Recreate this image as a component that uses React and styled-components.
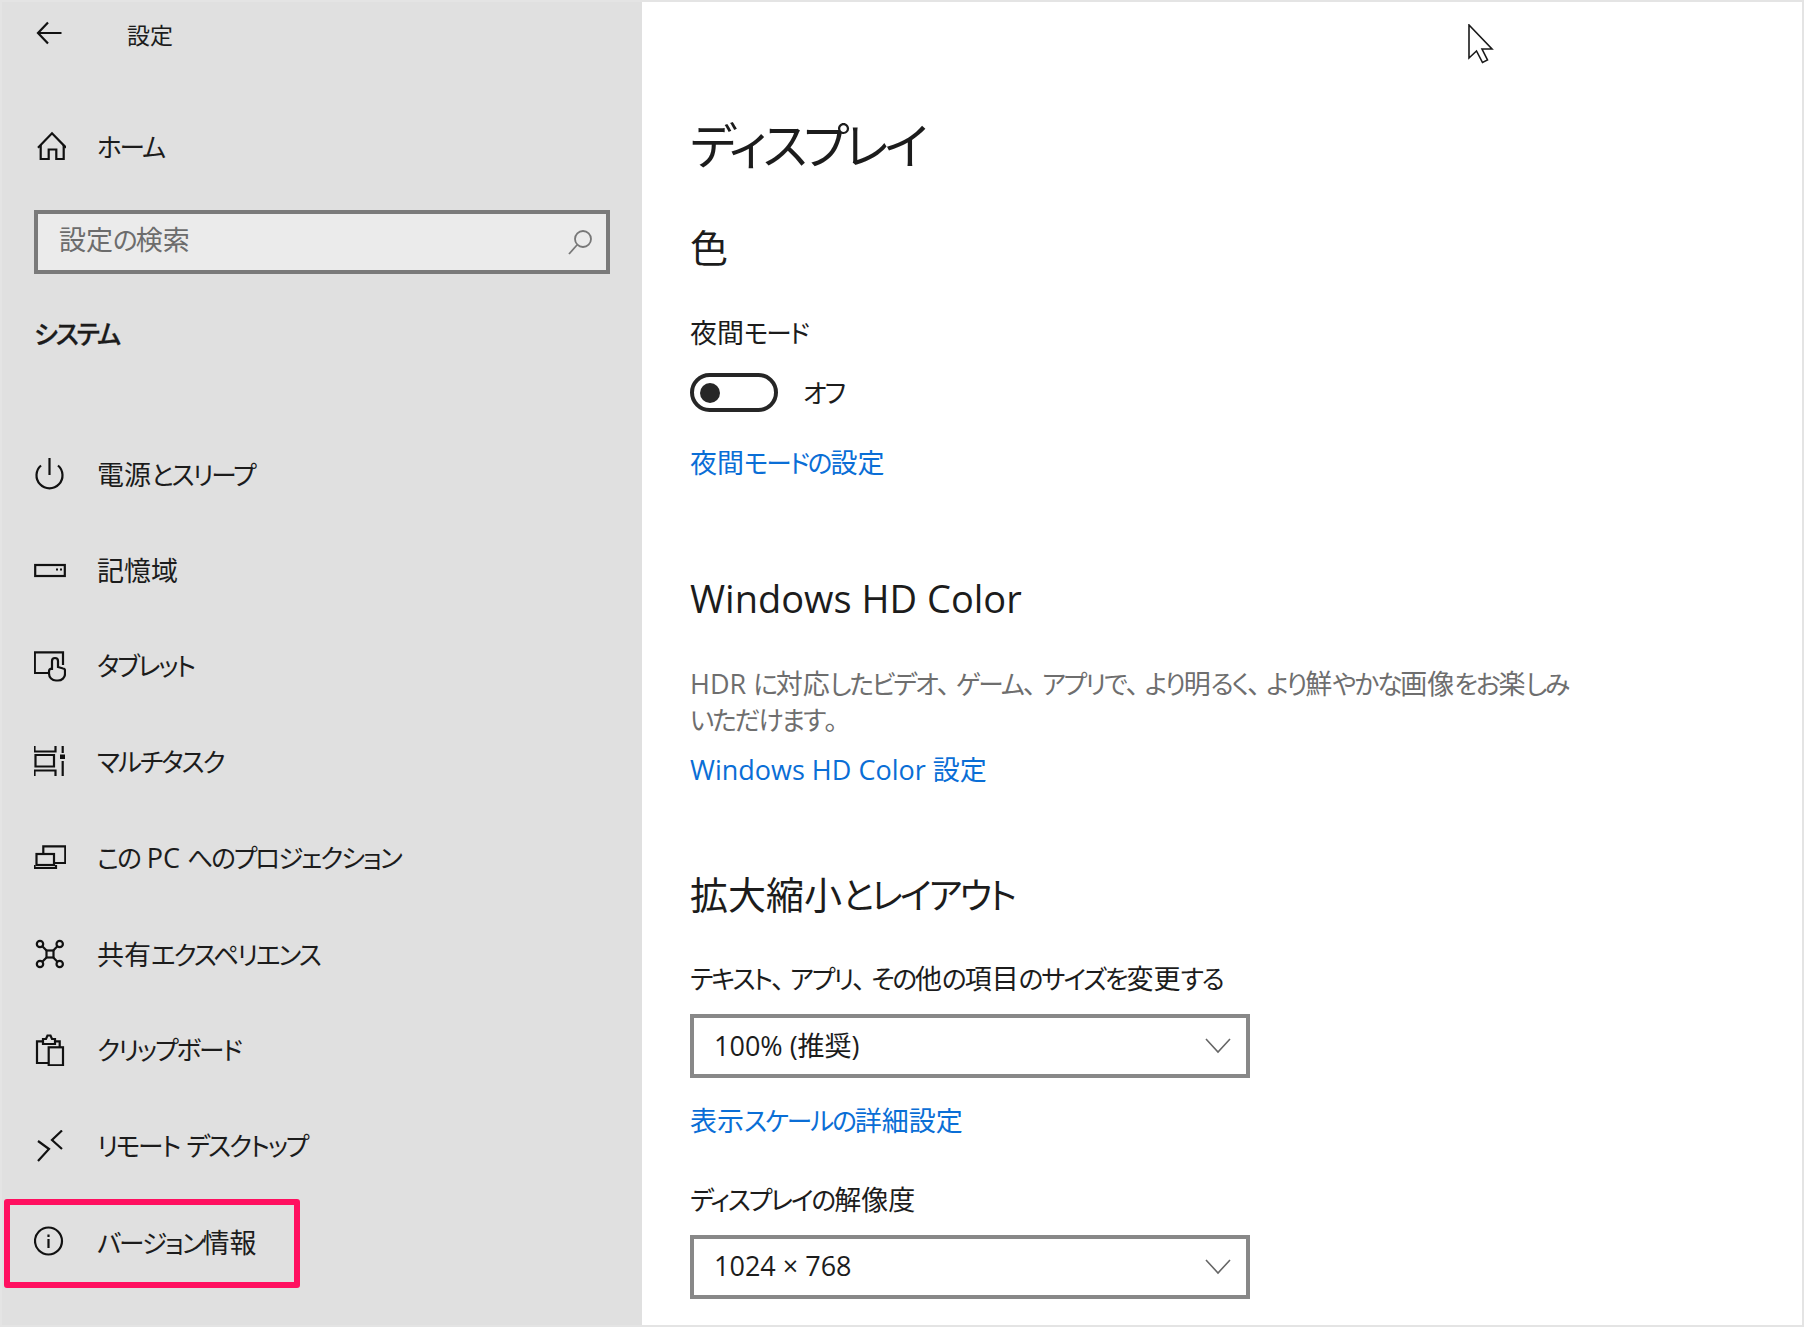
import React from 'react'
import styled, { createGlobalStyle } from 'styled-components'

const GlobalStyle = createGlobalStyle`
    html, body {
        margin: 0;
        padding: 0;
        background: #ffffff;
    }
    body {
        font-family: "Open Sans", "Noto Sans CJK JP", sans-serif;
        font-feature-settings: "palt";
        color: #1c1c1c;
    }
`;

const Window = styled.div`
    box-sizing: border-box;
    display: flex;
    width: 1804px;
    height: 1327px;
    border: 2px solid #e4e4e4;
    overflow: hidden;
    position: relative;
`;

// Yu Gothic UI kana run narrower than the Noto ones
const Kana = styled.span`
    font-size: 0.95em;
    line-height: 0;
    letter-spacing: -0.08em;
`;

const Punct = styled.span`
    letter-spacing: 0.2em;
`;

const Sidebar = styled.nav`
    flex: 0 0 640px;
    background: #e0e0e0;
`;

const TopBar = styled.div`
    display: flex;
    align-items: center;
    height: 66px;
    padding-left: 32px;
`;

const BackTitle = styled.span`
    margin-left: 61px;
    font-size: 23px;
    line-height: 30px;
`;

const Row = styled.div`
    position: relative;
    display: flex;
    align-items: center;
    gap: 31px;
    height: 96px;
    padding-left: 32px;
    font-size: 27px;
    margin-top: ${props => props.$top || 0}px;
`;

const RowLabel = styled.span`
    margin-top: -2px;
`;

const Icon = styled.svg`
    flex: none;
    width: 32px;
    height: 32px;
    fill: none;
    stroke: #111111;
    stroke-width: 2.2;
`;

const SearchBox = styled.div`
    box-sizing: border-box;
    display: flex;
    align-items: center;
    justify-content: space-between;
    width: 576px;
    height: 64px;
    margin: 15px 0 0 32px;
    padding: 0 13px 0 21px;
    border: 4px solid #7a7a7a;
    background: #ebebeb;
    color: #6c6c6c;
    font-size: 27px;
`;

const SearchText = styled.span`
    margin-top: -7px;
`;

const SearchIcon = styled.svg`
    width: 26px;
    height: 26px;
    fill: none;
    stroke: #777777;
    stroke-width: 1.8;
`;

const SectionTitle = styled.div`
    height: 40px;
    margin: 40px 0 72px 32px;
    font-size: 27px;
    font-weight: 500;
    line-height: 40px;
    -webkit-text-stroke: 0.3px #1c1c1c;
`;

const Highlight = styled.div`
    position: absolute;
    left: 2px;
    top: 5px;
    width: 296px;
    height: 89px;
    box-sizing: border-box;
    border: 6px solid #ff1060;
    border-radius: 3px;
`;

const Content = styled.main`
    flex: 1;
    padding: 112px 0 0 48px;
`;

const PageTitle = styled.h1`
    margin: 0;
    font-size: 52px;
    font-weight: 400;
    line-height: 60px;
`;

const Heading = styled.h2`
    margin: ${props => props.$top}px 0 0;
    font-size: 38px;
    font-weight: 400;
    line-height: 44px;
`;

const Label = styled.div`
    margin-top: ${props => props.$top}px;
    font-size: 27px;
    line-height: 36px;
`;

const Description = styled.p`
    margin: 46px 0 0;
    color: #6e6e6e;
    font-size: 27px;
    line-height: 36px;
`;

const TextLink = styled.a`
    display: block;
    margin-top: ${props => props.$top}px;
    color: #0a6ed6;
    font-size: 27px;
    line-height: 36px;
    text-decoration: none;
`;

const ToggleRow = styled.div`
    display: flex;
    align-items: center;
    gap: 25px;
    margin-top: 22px;
    font-size: 27px;
`;

const Toggle = styled.span`
    box-sizing: border-box;
    display: flex;
    align-items: center;
    width: 88px;
    height: 39px;
    padding-left: 6px;
    border: 4px solid #262626;
    border-radius: 20px;

    &::before {
        content: "";
        width: 20px;
        height: 20px;
        border-radius: 50%;
        background: #262626;
    }
`;

const Select = styled.div`
    box-sizing: border-box;
    display: flex;
    align-items: center;
    justify-content: space-between;
    width: 560px;
    height: 64px;
    margin-top: 17px;
    padding: 0 15px 0 20px;
    border: 4px solid #888888;
    font-size: 27px;
`;

const SelectText = styled.span`
    margin-top: -3px;
`;

const Chevron = styled.svg`
    width: 26px;
    height: 16px;
    fill: none;
    stroke: #666666;
    stroke-width: 1.6;
`;

const Cursor = styled.svg`
    position: absolute;
    left: 1466px;
    top: 22px;
    width: 26px;
    height: 40px;
    fill: #ffffff;
    stroke: #1a1a1a;
    stroke-width: 1.6;
`;

const icons = {
    power: <><path d="M7 7.500a13 13 0 1 0 17 0" /><path d="M15.500 0v17" /></>,
    storage: <><rect x="1.200" y="11" width="29.600" height="11" /><path d="M22 15.500h2M26 15.500h2" /></>,
    tablet: (
        <>
            <path d="M14 23H0.800V2.300H29V15" />
            <path d="M18 20V11a3 3 0 0 1 6 0v6l5 1.500a2 2 0 0 1 2 2V24a7 6.500 0 0 1-7 6.500h-2a7 7 0 0 1-7-7v-2a3 3 0 0 1 3-3" />
        </>
    ),
    multitask: (
        <>
            <path d="M0.500 0v5.500h21V0M1.500 9h18.500v11.500H1.500zM0.500 30v-5.500h21V30" />
            <path d="M28.700 -1v8M28.700 15v15" />
            <rect x="26" y="8.500" width="5" height="4.500" fill="#111111" stroke="none" />
        </>
    ),
    project: (
        <>
            <path d="M9.300 12V4.300h22V21H20" />
            <rect x="2.500" y="12" width="17.500" height="11" />
            <path d="M0.500 23v3h21.500v-3" />
        </>
    ),
    share: (
        <>
            <circle cx="6" cy="6" r="3.200" />
            <circle cx="25.700" cy="6" r="3.200" />
            <circle cx="6" cy="26" r="3.200" />
            <circle cx="25.700" cy="26" r="3.200" />
            <path d="M8.300 8.300l4.200 4.200M23.400 8.300l-4.100 4.200M8.300 23.700l4.200-4.200M23.400 23.700l-4.100-4.200" />
            <rect x="12.500" y="12.500" width="7" height="7" />
        </>
    ),
    clipboard: (
        <>
            <path d="M9 7.300H3V29H14.700" />
            <path d="M20 7.300H25.700V13.300" />
            <path d="M9 10V5h3l1.500-3.500h3L18 5h3v5z" />
            <rect x="14.700" y="13.300" width="14.300" height="18" />
        </>
    ),
    remote: <><path d="M4 11l11 8-11 12" /><path d="M28 0.500L18 10l10 9" /></>,
    info: (
        <>
            <circle cx="14.500" cy="15" r="13.500" />
            <path d="M14.500 13v9M14.500 8.500v2.500" />
        </>
    ),
}

const menu = [
    ['power', '電源とスリープ'],
    ['storage', '記憶域'],
    ['tablet', 'タブレット'],
    ['multitask', 'マルチタスク'],
    ['project', 'この PC へのプロジェクション'],
    ['share', '共有エクスペリエンス'],
    ['clipboard', 'クリップボード'],
    ['remote', 'リモート デスクトップ'],
    ['info', 'バージョン情報'],
]

const tight = (text) => text.split(/([\u3040-\u30ff]+|、)/).map((part, i) => {
    if (i % 2 === 0) return part;
    return part === '、' ? <Punct key={i}>{part}</Punct> : <Kana key={i}>{part}</Kana>;
});

const App = () => {
    return (
        <>
            <GlobalStyle />
            <Window>
                <Sidebar>
                    <TopBar>
                        <Icon viewBox="0 0 32 32">
                            <path d="M27.500 14H5M14 3.500L4 14l10 10.500" />
                        </Icon>
                        <BackTitle>設定</BackTitle>
                    </TopBar>
                    <Row $top={31}>
                        <Icon viewBox="0 0 32 32">
                            <path d="M4 16.700L18 2.300l14 14.400" />
                            <path d="M6.700 14v14h8v-9.500h7.600V28h7.400V14" />
                        </Icon>
                        <RowLabel>{tight('ホーム')}</RowLabel>
                    </Row>
                    <SearchBox>
                        <SearchText>{tight('設定の検索')}</SearchText>
                        <SearchIcon viewBox="0 0 26 26">
                            <circle cx="16" cy="10" r="8" />
                            <path d="M10 16L2 25" />
                        </SearchIcon>
                    </SearchBox>
                    <SectionTitle>{tight('システム')}</SectionTitle>
                    {menu.map(([icon, label]) => (
                        <Row key={icon}>
                            <Icon viewBox="0 0 32 32">{icons[icon]}</Icon>
                            <RowLabel>{tight(label)}</RowLabel>
                            {icon === 'info' ? <Highlight /> : null}
                        </Row>
                    ))}
                </Sidebar>
                <Content>
                    <PageTitle>{tight('ディスプレイ')}</PageTitle>
                    <Heading $top={51}>色</Heading>
                    <Label $top={46}>{tight('夜間モード')}</Label>
                    <ToggleRow>
                        <Toggle />
                        <span>{tight('オフ')}</span>
                    </ToggleRow>
                    <TextLink $top={33}>{tight('夜間モードの設定')}</TextLink>
                    <Heading $top={95}>Windows HD Color</Heading>
                    <Description>
                        {tight('HDR に対応したビデオ、ゲーム、アプリで、より明るく、より鮮やかな画像をお楽しみ')}<br />{tight('いただけます。')}
                    </Description>
                    <TextLink $top={14}>Windows HD Color 設定</TextLink>
                    <Heading $top={84}>{tight('拡大縮小とレイアウト')}</Heading>
                    <Label $top={45}>{tight('テキスト、アプリ、その他の項目のサイズを変更する')}</Label>
                    <Select>
                        <SelectText>100% (推奨)</SelectText>
                        <Chevron viewBox="0 0 26 16"><path d="M1 1l12 13L25 1" /></Chevron>
                    </Select>
                    <TextLink $top={25}>{tight('表示スケールの詳細設定')}</TextLink>
                    <Label $top={43}>{tight('ディスプレイの解像度')}</Label>
                    <Select>
                        <SelectText>1024 × 768</SelectText>
                        <Chevron viewBox="0 0 26 16"><path d="M1 1l12 13L25 1" /></Chevron>
                    </Select>
                </Content>
                <Cursor viewBox="0 0 26 40">
                    <path d="M1 1v33l7.500-7 6 11.500 5-2.500-5.500-11H24z" />
                </Cursor>
            </Window>
        </>
    );
}

export default App;
